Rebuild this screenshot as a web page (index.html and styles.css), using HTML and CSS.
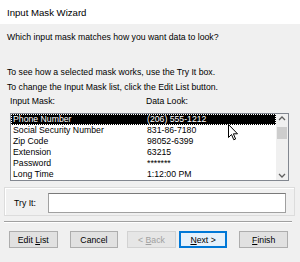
FILE: index.html
```html
<!DOCTYPE html>
<html lang="en">
<head>
  <meta charset="UTF-8">
  <title>Input Mask Wizard</title>
  <link rel="stylesheet" href="styles.css">
</head>
<body>
  <div class="window">
    <div class="titlebar">Input Mask Wizard</div>

    <div class="content">
      <p class="prompt">Which input mask matches how you want data to look?</p>
      <p class="hint">To see how a selected mask works, use the Try It box.</p>
      <p class="hint">To change the Input Mask list, click the Edit List button.</p>

      <div class="cols">
        <span class="c1">Input Mask:</span>
        <span class="c2">Data Look:</span>
      </div>

      <div class="listbox">
        <div class="rows">
          <div class="row sel"><span class="c1">Phone Number</span><span class="c2">(206) 555-1212</span></div>
          <div class="row"><span class="c1">Social Security Number</span><span class="c2">831-86-7180</span></div>
          <div class="row"><span class="c1">Zip Code</span><span class="c2">98052-6399</span></div>
          <div class="row"><span class="c1">Extension</span><span class="c2">63215</span></div>
          <div class="row"><span class="c1">Password</span><span class="c2">*******</span></div>
          <div class="row"><span class="c1">Long Time</span><span class="c2">1:12:00 PM</span></div>
        </div>
        <div class="scroll">
          <svg class="arrow" width="12" height="10" viewBox="0 0 12 10"><path d="M3 6 L6 3 L9 6" fill="none" stroke="#606060" stroke-width="1.3"/></svg>
          <div class="thumb"></div>
          <div class="track"></div>
          <svg class="arrow" width="12" height="10" viewBox="0 0 12 10"><path d="M3 4 L6 7 L9 4" fill="none" stroke="#606060" stroke-width="1.3"/></svg>
        </div>
      </div>

      <div class="tryit">
        <span class="label">Try It:</span>
        <div class="field"></div>
      </div>
    </div>

    <div class="sep"></div>

    <div class="buttons">
      <button class="btn">Edit <u>L</u>ist</button>
      <button class="btn">Cancel</button>
      <button class="btn off">&lt; <u>B</u>ack</button>
      <button class="btn def"><u>N</u>ext &gt;</button>
      <button class="btn"><u>F</u>inish</button>
    </div>

    <svg class="cursor" width="11" height="17" viewBox="0 0 11 17">
      <path d="M0.5 0.5 L0.5 13.5 L3.5 10.5 L5.8 15.8 L7.6 15 L5.4 9.8 L9.5 9.8 Z" fill="#fff" stroke="#000" stroke-width="1"/>
    </svg>
  </div>
</body>
</html>
```

FILE: styles.css
```css
body {
  margin: 0;
  background: #f0f0f0;
  font-family: 'Liberation Sans', Arial, sans-serif;
  font-size: 8.7px;
  color: #000;
}
.window {
  position: relative;
  width: 300px;
  height: 262px;
  overflow: hidden;
}
.titlebar {
  height: 24px;
  line-height: 26px;
  padding-left: 7px;
  background: #fff;
  font-size: 9.6px;
}
.content {
  padding: 0 8px 0 7px;
}
p {
  margin: 0;
  line-height: 12px;
}
.prompt {
  margin-top: 7px;
}
.hint {
  margin-top: 3px;
}
.prompt + .hint {
  margin-top: 23px;
}
.cols {
  display: flex;
  margin-top: 2px;
  padding-left: 3px;
  line-height: 12px;
}
.cols .c1 {
  width: 136px;
}
.listbox {
  display: flex;
  margin: 6px 3px 0 3px;
  height: 66px;
  border: 1px solid #828790;
  background: #fff;
}
.rows {
  flex: 1;
}
.row {
  display: flex;
  height: 11px;
  line-height: 11px;
  padding-left: 2px;
}
.row .c1 {
  width: 134px;
}
.row.sel {
  background: #000;
  color: #fff;
  outline: 1px dotted #fff;
  outline-offset: -1px;
}
.scroll {
  width: 12px;
  display: flex;
  flex-direction: column;
  background: #f0f0f0;
}
.arrow {
  display: block;
  height: 10px;
}
.thumb {
  height: 12px;
  margin: 3px 1px 0 1px;
  background: #cdcdcd;
}
.track {
  flex: 1;
}
.tryit {
  display: flex;
  align-items: center;
  margin: 6px -3px 0 -3px;
  height: 27px;
  border: 1px solid #dcdcdc;
  box-shadow: inset 1px 1px 0 #fff;
}
.label {
  width: 34px;
  padding-left: 9px;
  margin-top: 2px;
}
.field {
  width: 236px;
  height: 18px;
  margin-top: 2px;
  background: #fff;
  border: 1px solid #a0a0a0;
  border-top-color: #7a7a7a;
}
.sep {
  margin: 5px 8px 0 4px;
  border-top: 1px solid #a0a0a0;
  border-bottom: 1px solid #fff;
}
.buttons {
  display: flex;
  margin-top: 8px;
  padding-left: 9px;
}
.btn {
  width: 49px;
  height: 17px;
  margin: 0 12px 0 0;
  padding: 0;
  font-family: 'Liberation Sans', Arial, sans-serif;
  font-size: 8.7px;
  color: #000;
  background: #e1e1e1;
  border: 1px solid #adadad;
}
.btn:nth-child(2) {
  margin-right: 9px;
}
.btn.off {
  color: #a0a0a0;
  background: #e6e6e6;
  border-color: #d2d2d2;
  margin-right: 3px;
}
.btn.def {
  border: 2px solid #0078d7;
  background: #e5f1fb;
}
.cursor {
  position: absolute;
  left: 228px;
  top: 124px;
}
```
